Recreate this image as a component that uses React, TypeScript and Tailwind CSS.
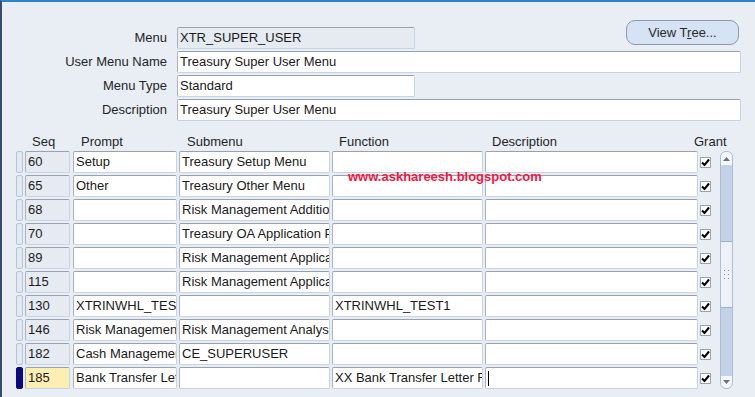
import React from "react";

type Row = { seq: string; prompt?: string; sub?: string; fn?: string; current?: boolean };

const rows: Row[] = [
  { seq: "60", prompt: "Setup", sub: "Treasury Setup Menu" },
  { seq: "65", prompt: "Other", sub: "Treasury Other Menu" },
  { seq: "68", sub: "Risk Management Additional Reports" },
  { seq: "70", sub: "Treasury OA Application Pages" },
  { seq: "89", sub: "Risk Management Applications" },
  { seq: "115", sub: "Risk Management Applications" },
  { seq: "130", prompt: "XTRINWHL_TEST1", fn: "XTRINWHL_TEST1" },
  { seq: "146", prompt: "Risk Management Analysis", sub: "Risk Management Analysis" },
  { seq: "182", prompt: "Cash Management", sub: "CE_SUPERUSER" },
  { seq: "185", prompt: "Bank Transfer Letter", fn: "XX Bank Transfer Letter Report", current: true },
];

function Field({
  w,
  children,
  bg = "bg-white",
  cursor = false,
}: {
  w: string;
  children?: React.ReactNode;
  bg?: string;
  cursor?: boolean;
}) {
  return (
    <div
      className={`${w} ${bg} h-[22px] shrink-0 rounded-[2px] border border-t-[#98a1ad] border-l-[#a9b2be] border-r-[#c6d3e6] border-b-[#c6d3e6] pl-[2px] overflow-hidden whitespace-nowrap text-[13px] leading-[20px] text-[#1a1a1a] flex items-center`}
    >
      {cursor && <div className="w-[1px] h-[15px] bg-black" />}
      <span>{children}</span>
    </div>
  );
}

function Check() {
  return (
    <div className="ml-[2px] w-[11px] h-[11px] shrink-0 border border-[#9aa3ae] bg-white flex items-center justify-center">
      <svg width="9" height="9" viewBox="0 0 9 9">
        <path d="M1 4.5 L3.5 7 L8 1.5" stroke="#000" strokeWidth="2" fill="none" />
      </svg>
    </div>
  );
}

function Label({ children }: { children: React.ReactNode }) {
  return (
    <div className="w-[165px] shrink-0 text-right text-[13px] leading-[22px] text-[#1f1f1f]">{children}</div>
  );
}

export default function App() {
  return (
    <div
      className="relative w-[755px] h-[397px] overflow-hidden bg-[#e9eef5] border-t-2 border-t-[#3181c6] border-l-2 border-l-[#3a4a6e]"
      style={{ fontFamily: '"Liberation Sans", Arial, sans-serif' }}
    >
      <div className="pt-[18px] flex flex-col">
        <div className="flex items-start">
          <div className="mt-[7px] flex items-center">
            <Label>Menu</Label>
            <div className="ml-[10px]">
              <Field w="w-[238px]" bg="bg-[#e6ebf2]">
                XTR_SUPER_USER
              </Field>
            </div>
          </div>
          <button className="ml-[211px] w-[113px] h-[25px] rounded-[9px] border border-[#8f9aa8] bg-[#d5e3f4] text-[13px] text-[#2a2a2a] leading-[23px] text-center">
            View T<span className="underline">r</span>ee...
          </button>
        </div>
        <div className="mt-[2px] flex items-center">
          <Label>User Menu Name</Label>
          <div className="ml-[10px]">
            <Field w="w-[564px]">Treasury Super User Menu</Field>
          </div>
        </div>
        <div className="mt-[2px] flex items-center">
          <Label>Menu Type</Label>
          <div className="ml-[10px]">
            <Field w="w-[238px]">Standard</Field>
          </div>
        </div>
        <div className="mt-[2px] flex items-center">
          <Label>Description</Label>
          <div className="ml-[10px]">
            <Field w="w-[564px]">Treasury Super User Menu</Field>
          </div>
        </div>

        <div className="mt-[13px] h-[16px] pl-[14px] flex text-[13px] leading-[16px] text-[#1f1f1f]">
          <div className="ml-[9px] w-[45px] pl-[7px]">Seq</div>
          <div className="ml-[3px] w-[104px] pl-[8px]">Prompt</div>
          <div className="ml-[2px] w-[151px] pl-[8px]">Submenu</div>
          <div className="ml-[2px] w-[151px] pl-[7px]">Function</div>
          <div className="ml-[2px] w-[213px] pl-[7px]">Description</div>
          <div className="ml-[-4px]">Grant</div>
        </div>

        <div className="mt-[1px] pl-[14px] flex items-start">
          <div className="flex flex-col gap-[2px]">
            {rows.map((r) => (
              <div key={r.seq} className="flex items-center h-[22px]">
                <div
                  className={`w-[7px] h-[22px] shrink-0 rounded-[2px] border ${
                    r.current ? "bg-[#0a0a80] border-[#0a0a80]" : "bg-[#e3e9f1] border-[#b7c3d4]"
                  }`}
                />
                <div className="ml-[2px]">
                  <Field w="w-[45px]" bg={r.current ? "bg-[#fdefb2]" : "bg-[#e6ebf2]"}>
                    {r.seq}
                  </Field>
                </div>
                <div className="ml-[3px]">
                  <Field w="w-[104px]">{r.prompt}</Field>
                </div>
                <div className="ml-[2px]">
                  <Field w="w-[151px]">{r.sub}</Field>
                </div>
                <div className="ml-[2px]">
                  <Field w="w-[151px]">{r.fn}</Field>
                </div>
                <div className="ml-[2px]">
                  <Field w="w-[213px]" cursor={r.current} />
                </div>
                <Check />
              </div>
            ))}
          </div>

          <div className="ml-[9px] w-[13px] h-[238px] rounded-[6px] border border-[#aebbd0] bg-[#c3d2e7] flex flex-col overflow-hidden">
            <div className="h-[14px] bg-[#f3f6fa] flex items-center justify-center border-b border-[#c9d4e3]">
              <svg width="7" height="4" viewBox="0 0 7 4">
                <path d="M0 4 L3.5 0 L7 4 Z" fill="#6a7384" />
              </svg>
            </div>
            <div className="h-[75px]" />
            <div className="h-[67px] bg-[#eef2f8] border-t border-b border-[#9fb0c8] flex flex-col items-center justify-center gap-[3px]">
              {[0, 1, 2].map((i) => (
                <div key={i} className="flex gap-[3px]">
                  <div className="w-[1px] h-[1px] bg-[#8391a6]" />
                  <div className="w-[1px] h-[1px] bg-[#8391a6]" />
                </div>
              ))}
            </div>
            <div className="flex-1" />
            <div className="h-[12px] flex items-center justify-center bg-[#f3f6fa]">
              <svg width="7" height="4" viewBox="0 0 7 4">
                <path d="M0 0 L3.5 4 L7 0 Z" fill="#6a7384" />
              </svg>
            </div>
          </div>
        </div>
      </div>

      <div
        className="absolute left-[346px] top-[167px] text-[13px] leading-[15px] font-bold text-[#f5173f] whitespace-nowrap"
        style={{ fontFamily: '"Liberation Sans", Arial, sans-serif' }}
      >
        www.askhareesh.blogspot.com
      </div>
    </div>
  );
}
